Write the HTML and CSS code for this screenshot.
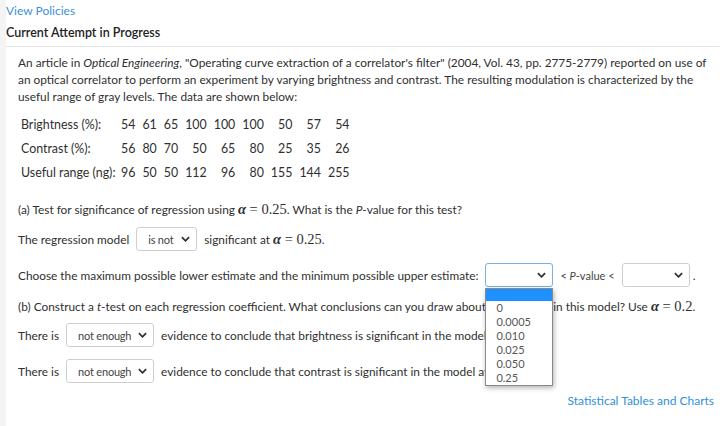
FILE: index.html
```html
<!DOCTYPE html>
<html>
<head>
<meta charset="utf-8">
<link rel="stylesheet" href="styles.css">
</head>
<body>
<div class="page">
  <div class="header">
    <a class="policies" href="#">View Policies</a>
    <div class="attempt">Current Attempt in Progress</div>
  </div>
  <div class="content">
    <p class="intro">An article in <i>Optical Engineering</i>, "Operating curve extraction of a correlator's filter" (2004, Vol. 43, pp. 2775-2779) reported on use of an optical correlator to perform an experiment by varying brightness and contrast. The resulting modulation is characterized by the useful range of gray levels. The data are shown below:</p>
    <table class="data">
      <tr><td class="lbl">Brightness (%):</td><td>54</td><td>61</td><td>65</td><td>100</td><td>100</td><td>100</td><td>50</td><td>57</td><td>54</td></tr>
      <tr><td class="lbl">Contrast (%):</td><td>56</td><td>80</td><td>70</td><td>50</td><td>65</td><td>80</td><td>25</td><td>35</td><td>26</td></tr>
      <tr><td class="lbl">Useful range (ng):</td><td>96</td><td>50</td><td>50</td><td>112</td><td>96</td><td>80</td><td>155</td><td>144</td><td>255</td></tr>
    </table>
    <p class="qa">(a) Test for significance of regression using <span class="m"><i>α</i> = 0.25</span>. What is the <i>P</i>-value for this test?</p>
    <div class="row r1">
      <span>The regression model</span>
      <span class="sel s-isnot"><span class="val">is not</span><svg class="chev" viewBox="0 0 10 6"><path d="M1 1 L5 5 L9 1" /></svg></span>
      <span>significant at <span class="m"><i>α</i> = 0.25</span>.</span>
    </div>
    <div class="row r2">
      <span>Choose the maximum possible lower estimate and the minimum possible upper estimate:</span>
      <span class="selwrap">
        <span class="sel s-p focus"><span class="val"></span><svg class="chev" viewBox="0 0 10 6"><path d="M1 1 L5 5 L9 1" /></svg></span>
        <span class="menu">
          <span class="opt hl">&nbsp;</span>
          <span class="opt">0</span>
          <span class="opt">0.0005</span>
          <span class="opt">0.010</span>
          <span class="opt">0.025</span>
          <span class="opt">0.050</span>
          <span class="opt">0.25</span>
        </span>
      </span>
      <span class="pv">&lt; <i>P</i>-value &lt;</span>
      <span class="sel s-p2"><span class="val"></span><svg class="chev" viewBox="0 0 10 6"><path d="M1 1 L5 5 L9 1" /></svg></span>
      <span class="dot">.</span>
    </div>
    <p class="qb">(b) Construct a <i>t</i>-test on each regression coefficient. What conclusions can you draw about <span class="tight">each variable</span> in this model? Use <span class="m"><i>α</i> = 0.2</span>.</p>
    <div class="row r3">
      <span>There is</span>
      <span class="sel s-ne"><span class="val">not enough</span><svg class="chev" viewBox="0 0 10 6"><path d="M1 1 L5 5 L9 1" /></svg></span>
      <span>evidence to conclude that brightness is significant in the model at <span class="m"><i>α</i> = 0.2</span>.</span>
    </div>
    <div class="row r4">
      <span>There is</span>
      <span class="sel s-ne"><span class="val">not enough</span><svg class="chev" viewBox="0 0 10 6"><path d="M1 1 L5 5 L9 1" /></svg></span>
      <span>evidence to conclude that contrast is significant in the model at <span class="m"><i>α</i> = 0.2</span>.</span>
    </div>
    <div class="links"><a class="tables" href="#">Statistical Tables and Charts</a></div>
  </div>
</div>
</body>
</html>
```
FILE: styles.css
```css
html, body {
  margin: 0;
  padding: 0;
  background: #f4f4f4;
  height: 100%;
  overflow: hidden;
}
body {
  font-family: Lato, "Noto Sans", sans-serif;
  color: #2f2f2f;
  font-size: 11.85px;
}
.page {
  margin-left: 6px;
  background: #ffffff;
  min-height: 426px;
}
.header {
  border-bottom: 1px solid #e6e6e6;
  height: 46px;
}
.policies {
  display: block;
  padding-top: 3px;
  height: 16px;
  line-height: 16px;
  font-size: 12px;
  color: #3d8fdc;
  text-decoration: none;
}
.attempt {
  margin-top: 6px;
  line-height: 16px;
  font-size: 12.5px;
  font-weight: 600;
  color: #222;
}
.content {
  padding-left: 12px;
  padding-right: 0;
}
.intro {
  margin: 7px 0 0 0;
  line-height: 17px;
  padding-right: 4px;
}
.data {
  border-collapse: collapse;
  margin-top: 7px;
  margin-left: 0;
  font-size: 12.4px;
}
.data td {
  height: 24px;
  padding: 0 3.5px;
  text-align: right;
  white-space: nowrap;
}
.data td.lbl {
  text-align: left;
  padding-left: 3px;
  padding-right: 2px;
}
.m {
  font-family: "Liberation Serif", "DejaVu Serif", serif;
  font-size: 14.5px;
}
.m i {
  font-weight: bold;
}
.qa {
  margin: 17px 0 0 0;
  line-height: 17px;
}
.row {
  display: flex;
  align-items: center;
  gap: 7px;
  height: 24px;
  white-space: nowrap;
}
.r1 { margin-top: 9px; }
.r2 { margin-top: 12px; }
.r3 { margin-top: 8px; }
.r4 { margin-top: 12px; }
.qb {
  margin: 11px 0 0 0;
  line-height: 17px;
  white-space: nowrap;
}
.tight {
  letter-spacing: -0.5px;
}
.sel {
  box-sizing: border-box;
  height: 24px;
  border: 1px solid #cfcfcf;
  border-radius: 3px;
  background: #fff;
  display: flex;
  align-items: center;
  justify-content: space-between;
  padding: 0 6px 0 11px;
  font-size: 11px;
  color: #444;
  letter-spacing: -0.2px;
}
.sel.focus {
  border-color: #7ab0e6;
}
.chev {
  width: 9px;
  height: 6px;
  flex: none;
}
.chev path {
  fill: none;
  stroke: #333;
  stroke-width: 2;
}
.s-isnot { width: 61px; }
.s-p { width: 68px; }
.s-p2 { width: 68px; }
.s-ne { width: 88px; }
.selwrap {
  position: relative;
}
.menu {
  position: absolute;
  left: 0;
  top: 25px;
  width: 68px;
  box-sizing: border-box;
  border: 1px solid #8a8a8a;
  background: #fff;
  box-shadow: 1px 2px 5px rgba(0, 0, 0, 0.3);
  display: flex;
  flex-direction: column;
  z-index: 5;
}
.opt {
  display: block;
  height: 14px;
  line-height: 14px;
  font-size: 11px;
  padding-left: 10px;
  color: #555;
}
.opt.hl {
  background: #1e90ff;
  height: 12px;
}
.pv {
  font-size: 11px;
  color: #444;
}
.dot { margin-left: -4px; }
.links {
  display: flex;
  justify-content: flex-end;
  margin-top: 9px;
  padding-right: 6px;
}
.tables {
  color: #2f8fe0;
  text-decoration: none;
  font-size: 12px;
  line-height: 17px;
}
```
